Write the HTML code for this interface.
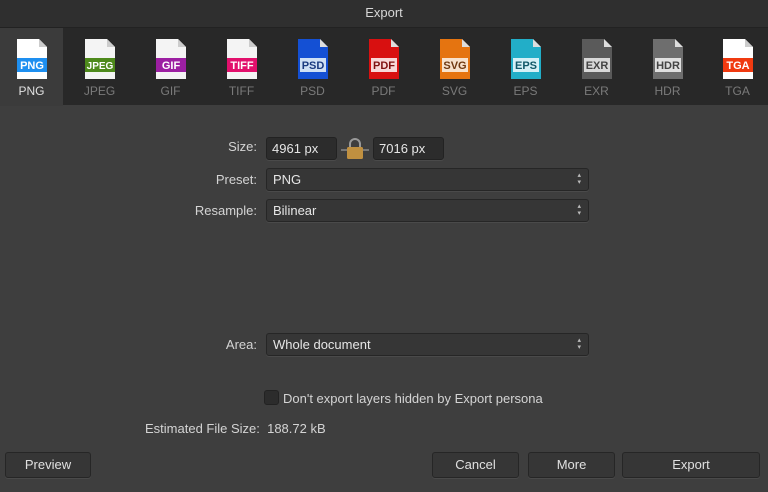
<!DOCTYPE html>
<html><head><meta charset="utf-8"><style>
*{margin:0;padding:0;box-sizing:border-box}
body{width:768px;height:492px;background:#3e3e3e;font-family:"Liberation Sans",sans-serif;color:#ddd;position:relative;overflow:hidden}
.title{position:absolute;left:0;top:0;width:768px;height:27px;background:#2f2f2f;text-align:center;font-size:13px;line-height:26px;color:#d8d8d8}
.bar{position:absolute;left:0;top:27px;width:768px;height:78px;background:#282828;border-top:1px solid #222}
.tab{position:absolute;top:0;width:71px;height:78px;text-align:center}
.tab.sel{background:#3b3b3b;left:0;width:63px}
.tab svg{position:absolute;left:50%;margin-left:-16px;top:10px}
.tab .lb{position:absolute;left:0;right:0;top:56px;font-size:12px;color:#7a7a7a}
.tab.sel .lb{color:#e0e0e0}
.lbl{position:absolute;font-size:13px;color:#d4d4d4;text-align:right;white-space:nowrap}
.field{position:absolute;background:#2c2c2c;border:1px solid #222;border-radius:3px;font-size:13px;color:#e6e6e6;padding-left:5px;line-height:21px;box-shadow:0 1px 0 #4a4a4a}
.sel2{position:absolute;background:#363636;border:1px solid #262626;border-radius:3px;font-size:13px;color:#e6e6e6;padding-left:6px;line-height:21px;box-shadow:0 1px 0 #4a4a4a}
.sel2:after{content:"▴\A▾";white-space:pre;position:absolute;right:7px;top:3px;font-size:7px;line-height:7px;color:#bbb}
.btn{position:absolute;top:452px;height:26px;background:#363636;border:1px solid #262626;border-radius:3px;font-size:13px;color:#e0e0e0;text-align:center;line-height:24px;box-shadow:0 1px 0 #4a4a4a}
</style></head><body>
<div class="title">Export</div>
<div class="bar">
<div class="tab sel"><svg width="32" height="42" viewBox="0 0 32 42"><path d="M1 1h22l8 8v32H1z" fill="#fff"/><path d="M23 1v8h8" fill="#ccc"/><rect x="1" y="20" width="30" height="14" fill="#1e8ff0"/><text x="16" y="31" text-anchor="middle" font-size="11" font-weight="bold" fill="#fff" font-family="Liberation Sans">PNG</text></svg><div class="lb">PNG</div></div>
<div class="tab" style="left:64px"><svg width="32" height="42" viewBox="0 0 32 42"><path d="M1 1h22l8 8v32H1z" fill="#f4f4f4"/><path d="M23 1v8h8" fill="#ccc"/><rect x="1" y="20" width="30" height="14" fill="#4e8a1c"/><text x="16" y="31" text-anchor="middle" font-size="10" font-weight="bold" fill="#fff" font-family="Liberation Sans">JPEG</text></svg><div class="lb">JPEG</div></div>
<div class="tab" style="left:135px"><svg width="32" height="42" viewBox="0 0 32 42"><path d="M1 1h22l8 8v32H1z" fill="#f4f4f4"/><path d="M23 1v8h8" fill="#ccc"/><rect x="1" y="20" width="30" height="14" fill="#9c1fa2"/><text x="16" y="31" text-anchor="middle" font-size="11" font-weight="bold" fill="#fff" font-family="Liberation Sans">GIF</text></svg><div class="lb">GIF</div></div>
<div class="tab" style="left:206px"><svg width="32" height="42" viewBox="0 0 32 42"><path d="M1 1h22l8 8v32H1z" fill="#f4f4f4"/><path d="M23 1v8h8" fill="#ccc"/><rect x="1" y="20" width="30" height="14" fill="#e2106c"/><text x="16" y="31" text-anchor="middle" font-size="11" font-weight="bold" fill="#fff" font-family="Liberation Sans">TIFF</text></svg><div class="lb">TIFF</div></div>
<div class="tab" style="left:277px"><svg width="32" height="42" viewBox="0 0 32 42"><path d="M1 1h22l8 8v32H1z" fill="#1450d4"/><path d="M23 1v8h8" fill="#ddd"/><rect x="3" y="20" width="26" height="14" fill="#cfe0f5"/><text x="16" y="31" text-anchor="middle" font-size="11" font-weight="bold" fill="#1a3a80" font-family="Liberation Sans">PSD</text></svg><div class="lb">PSD</div></div>
<div class="tab" style="left:348px"><svg width="32" height="42" viewBox="0 0 32 42"><path d="M1 1h22l8 8v32H1z" fill="#d81010"/><path d="M23 1v8h8" fill="#ddd"/><rect x="3" y="20" width="26" height="14" fill="#f8d8d8"/><text x="16" y="31" text-anchor="middle" font-size="11" font-weight="bold" fill="#801010" font-family="Liberation Sans">PDF</text></svg><div class="lb">PDF</div></div>
<div class="tab" style="left:419px"><svg width="32" height="42" viewBox="0 0 32 42"><path d="M1 1h22l8 8v32H1z" fill="#e57410"/><path d="M23 1v8h8" fill="#ddd"/><rect x="3" y="20" width="26" height="14" fill="#f8e2cc"/><text x="16" y="31" text-anchor="middle" font-size="11" font-weight="bold" fill="#703810" font-family="Liberation Sans">SVG</text></svg><div class="lb">SVG</div></div>
<div class="tab" style="left:490px"><svg width="32" height="42" viewBox="0 0 32 42"><path d="M1 1h22l8 8v32H1z" fill="#22aec8"/><path d="M23 1v8h8" fill="#ddd"/><rect x="3" y="20" width="26" height="14" fill="#d4f0f6"/><text x="16" y="31" text-anchor="middle" font-size="11" font-weight="bold" fill="#105868" font-family="Liberation Sans">EPS</text></svg><div class="lb">EPS</div></div>
<div class="tab" style="left:561px"><svg width="32" height="42" viewBox="0 0 32 42"><path d="M1 1h22l8 8v32H1z" fill="#5a5a5a"/><path d="M23 1v8h8" fill="#ddd"/><rect x="3" y="20" width="26" height="14" fill="#d8d8d8"/><text x="16" y="31" text-anchor="middle" font-size="11" font-weight="bold" fill="#444" font-family="Liberation Sans">EXR</text></svg><div class="lb">EXR</div></div>
<div class="tab" style="left:632px"><svg width="32" height="42" viewBox="0 0 32 42"><path d="M1 1h22l8 8v32H1z" fill="#6e6e6e"/><path d="M23 1v8h8" fill="#ddd"/><rect x="3" y="20" width="26" height="14" fill="#e0e0e0"/><text x="16" y="31" text-anchor="middle" font-size="11" font-weight="bold" fill="#444" font-family="Liberation Sans">HDR</text></svg><div class="lb">HDR</div></div>
<div class="tab" style="left:702px"><svg width="32" height="42" viewBox="0 0 32 42"><path d="M1 1h22l8 8v32H1z" fill="#fff"/><path d="M23 1v8h8" fill="#ccc"/><rect x="1" y="20" width="30" height="14" fill="#f03a10"/><text x="16" y="31" text-anchor="middle" font-size="11" font-weight="bold" fill="#fff" font-family="Liberation Sans">TGA</text></svg><div class="lb">TGA</div></div>
</div>

<div class="lbl" style="left:150px;width:107px;top:139px">Size:</div>
<div class="field" style="left:266px;top:137px;width:71px;height:23px">4961 px</div>
<svg style="position:absolute;left:340px;top:138px" width="30" height="22" viewBox="0 0 30 22"><line x1="1" y1="12" x2="29" y2="12" stroke="#777" stroke-width="2"/><path d="M10 10V6a5 5 0 0 1 10 0v4" fill="none" stroke="#999" stroke-width="2"/><rect x="7" y="9" width="16" height="12" rx="1.5" fill="#c09040"/></svg>
<div class="field" style="left:373px;top:137px;width:71px;height:23px">7016 px</div>
<div class="lbl" style="left:150px;width:107px;top:172px">Preset:</div>
<div class="sel2" style="left:266px;top:168px;width:323px;height:23px">PNG</div>
<div class="lbl" style="left:150px;width:107px;top:203px">Resample:</div>
<div class="sel2" style="left:266px;top:199px;width:323px;height:23px">Bilinear</div>
<div class="lbl" style="left:150px;width:107px;top:337px">Area:</div>
<div class="sel2" style="left:266px;top:333px;width:323px;height:23px">Whole document</div>
<div style="position:absolute;left:264px;top:390px;width:15px;height:15px;background:#2c2c2c;border:1px solid #222;border-radius:3px"></div>
<div class="lbl" style="left:283px;top:391px;text-align:left">Don't export layers hidden by Export persona</div>
<div class="lbl" style="left:145px;top:421px;text-align:left">Estimated File Size:&nbsp;&nbsp;188.72 kB</div>
<div class="btn" style="left:5px;width:86px">Preview</div>
<div class="btn" style="left:432px;width:87px">Cancel</div>
<div class="btn" style="left:528px;width:87px">More</div>
<div class="btn" style="left:622px;width:138px">Export</div>
</body></html>
